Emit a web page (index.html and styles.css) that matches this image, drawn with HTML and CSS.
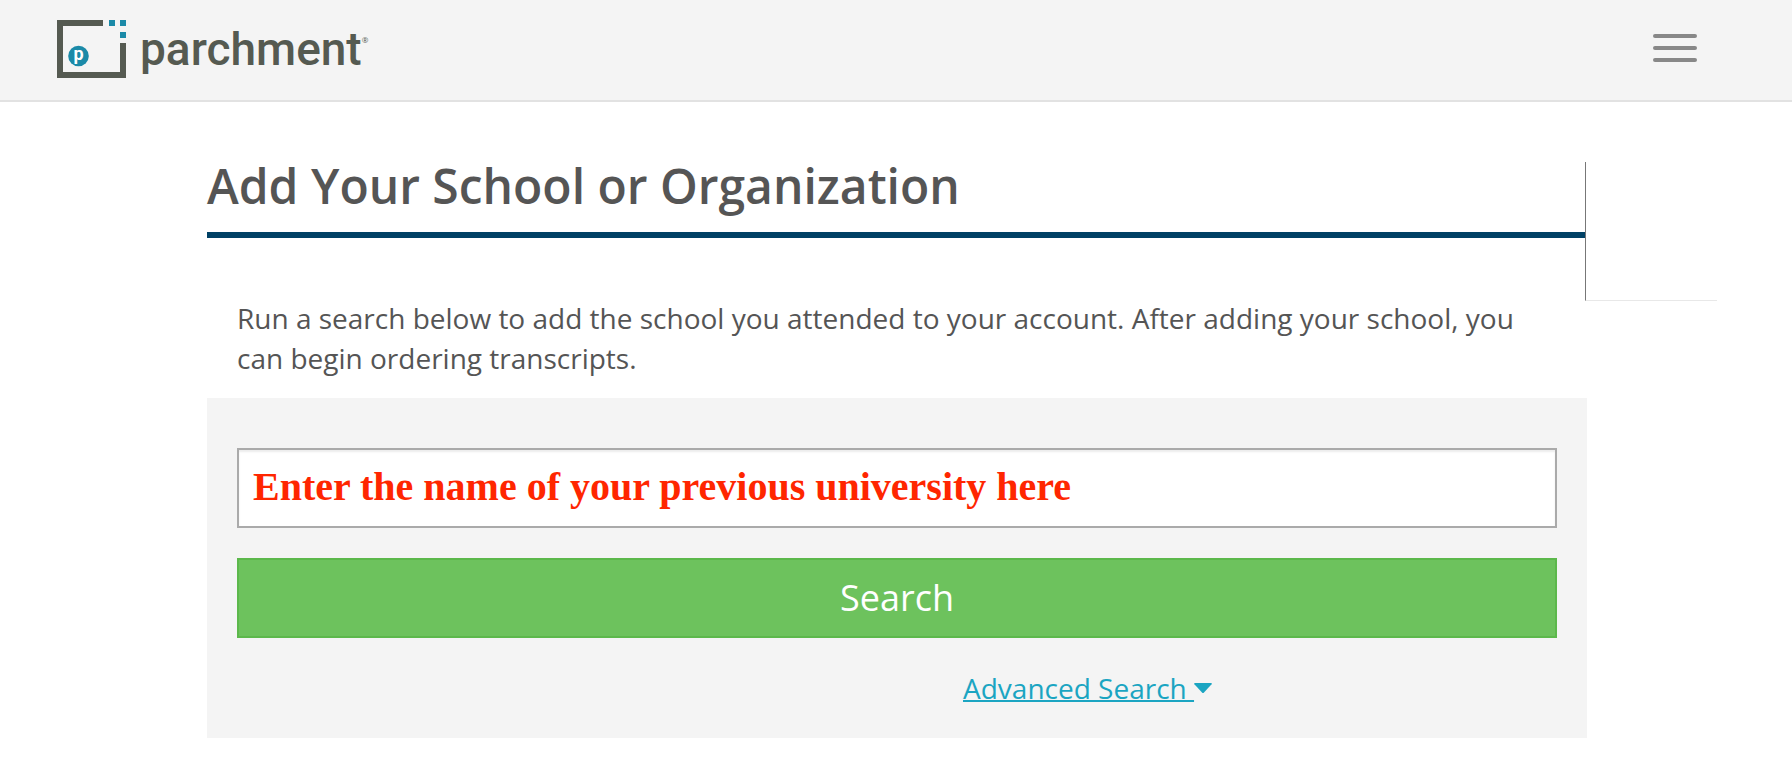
FILE: index.html
```html
<!DOCTYPE html>
<html lang="en">
<head>
  <meta charset="UTF-8">
  <meta name="viewport" content="width=device-width, initial-scale=1.0">
  <title>Add Your School or Organization</title>
  <link rel="stylesheet" href="styles.css">
</head>
<body>
  <header class="site-header">
    <a class="logo" href="#">
      <svg class="logo-mark" width="69" height="58" viewBox="0 0 69 58" aria-hidden="true">
        <path class="frame" d="M46 3H3v52h63V23"/>
        <path class="dots" d="M52 0h6v6h-6zM63 0h6v6h-6zM63 12h6v6h-6z"/>
        <circle class="dots" cx="21.5" cy="36" r="10.3"/>
        <text class="logo-letter" x="21.5" y="40" text-anchor="middle">p</text>
      </svg>
      <span class="logo-name">parchment</span><span class="logo-reg">®</span>
    </a>
    <button class="menu-btn" type="button" aria-label="Menu">
      <span class="bar"></span>
      <span class="bar"></span>
      <span class="bar"></span>
    </button>
  </header>

  <main class="container">
    <div class="title-row">
      <h1>Add Your School or Organization</h1>
      <div class="side-box"></div>
    </div>

    <p class="intro">Run a search below to add the school you attended to your account. After adding your school, you can begin ordering transcripts.</p>

    <form class="search-panel">
      <input class="search-input" type="text" name="school" aria-label="School name" placeholder="Enter the name of your previous university here">
      <button class="search-btn" type="button">Search</button>
      <div class="advanced"><a href="#">Advanced Search </a><svg class="caret" width="18" height="10" viewBox="0 0 18 10" aria-hidden="true"><path d="M1 0h16q1.500 0 .6 1.200L10 9.400q-1 1-2 0L.4 1.200Q-.5 0 1 0z"/></svg></div>
    </form>
  </main>
</body>
</html>
```

FILE: styles.css
```css
* {
  box-sizing: border-box;
}

body {
  margin: 0;
  background: #fff;
  color: #555;
  font-family: "Open Sans", sans-serif;
  font-size: 28px;
  line-height: 40px;
}

/* Header */
.site-header {
  display: flex;
  justify-content: space-between;
  align-items: flex-start;
  height: 102px;
  padding: 20px 95px 0 57px;
  background: #f4f4f4;
  border-bottom: 2px solid #e2e2e2;
}

.logo {
  display: flex;
  color: #555a51;
  text-decoration: none;
}

.logo-mark {
  margin-right: 14px;
}

.frame {
  fill: none;
  stroke: #555a51;
  stroke-width: 6;
}

.dots {
  fill: #1b8aa8;
}

.logo-letter {
  fill: #fff;
  font-family: Roboto, sans-serif;
  font-size: 18px;
  font-weight: bold;
}

.logo-name {
  font-family: Roboto, sans-serif;
  font-size: 46px;
  font-weight: 500;
  line-height: 58px;
}

.logo-reg {
  font-size: 8px;
}

.menu-btn {
  display: flex;
  flex-direction: column;
  gap: 8px;
  margin-top: 14px;
  padding: 0;
  background: none;
  border: none;
  cursor: pointer;
}

.bar {
  width: 44px;
  height: 4px;
  background: #888;
  border-radius: 2px;
}

/* Content */
.container {
  max-width: 1382px;
  margin: 0 auto;
  padding: 52px 0 0 2px;
}

.title-row {
  position: relative;
}

h1 {
  margin: 0;
  padding-bottom: 14px;
  border-bottom: 6px solid #004165;
  font-size: 48px;
  font-weight: 600;
  line-height: 64px;
}

.side-box {
  position: absolute;
  top: 8px;
  left: 100%;
  width: 132px;
  height: 139px;
  margin-left: -2px;
  background: #fff;
  border-left: 1px solid #777;
  border-bottom: 1px solid #e8e8e8;
}

.intro {
  margin: 60px 30px 20px;
}

.search-panel {
  display: flex;
  flex-direction: column;
  gap: 30px;
  padding: 50px 30px 30px;
  background: #f4f4f4;
}

.search-input {
  height: 80px;
  padding: 0 14px 4px;
  background: #fff;
  border: 2px solid #aaa;
  border-radius: 0;
  box-shadow: inset 0 2px 2px rgba(0, 0, 0, 0.075);
  color: #ff2600;
  font-family: "Liberation Serif", serif;
  font-size: 40px;
  font-weight: bold;
}

.search-input::placeholder {
  color: #ff2600;
  opacity: 1;
}

.search-btn {
  height: 80px;
  padding: 0 0 2px;
  background: #6dc25d;
  border: 2px solid #5cb84b;
  color: #fff;
  font-family: inherit;
  font-size: 36px;
  cursor: pointer;
}

.advanced {
  margin-left: 55%;
  white-space: pre;
}

.advanced a {
  color: #1ba5c2;
  text-decoration: underline;
  text-decoration-thickness: 2px;
}

.caret {
  fill: #1ba5c2;
  vertical-align: 6px;
}
```
